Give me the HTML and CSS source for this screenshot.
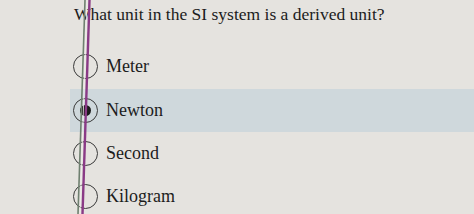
FILE: index.html
```html
<!DOCTYPE html>
<html lang="en">
<head>
    <meta charset="UTF-8">
    <meta name="viewport" content="width=device-width, initial-scale=1.0">
    <title>Quiz Question</title>
    <link rel="stylesheet" href="styles.css">
</head>
<body>
    <div class="question">What unit in the SI system is a derived unit?</div>

    <div class="options">
        <div class="option"><span class="radio"></span><span class="label">Meter</span></div>
        <div class="option selected"><span class="radio checked"></span><span class="label">Newton</span></div>
        <div class="option"><span class="radio"></span><span class="label">Second</span></div>
        <div class="option"><span class="radio"></span><span class="label">Kilogram</span></div>
    </div>

    <svg class="margin-lines" width="474" height="214" viewBox="0 0 474 214">
        <line x1="85" y1="0" x2="78" y2="214" stroke="#6f8070" stroke-width="1.6"/>
        <line x1="87" y1="0" x2="80" y2="214" stroke="#f2f0ee" stroke-width="0.8"/>
        <line x1="89.5" y1="0" x2="82.5" y2="214" stroke="#8a3a86" stroke-width="2.4"/>
    </svg>
</body>
</html>
```

FILE: styles.css
```css
body {
    margin: 0;
    background-color: #e5e3df;
    font-family: "Liberation Serif", "Times New Roman", serif;
    color: #1c1c1c;
    position: relative;
    height: 214px;
    overflow: hidden;
}
.question {
    padding-left: 74px;
    height: 28px;
    line-height: 28px;
    font-size: 17.5px;
}
.options {
    margin-top: 16px;
    margin-left: 70px;
}
.option {
    display: flex;
    align-items: center;
    height: 43px;
    padding-left: 3px;
}
.option:first-child {
    height: 45px;
}
.option.selected {
    background-color: #cfd8dc;
}
.radio {
    width: 23px;
    height: 23px;
    border: 1.4px solid #3a3a3a;
    border-radius: 50%;
    position: relative;
    flex-shrink: 0;
}
.radio.checked::after {
    content: "";
    position: absolute;
    left: 6px;
    top: 6px;
    width: 11px;
    height: 11px;
    border-radius: 50%;
    background-color: #1a1a1a;
}
.label {
    margin-left: 8px;
    font-size: 18px;
}
.margin-lines {
    position: absolute;
    left: 0;
    top: 0;
    pointer-events: none;
}
```
